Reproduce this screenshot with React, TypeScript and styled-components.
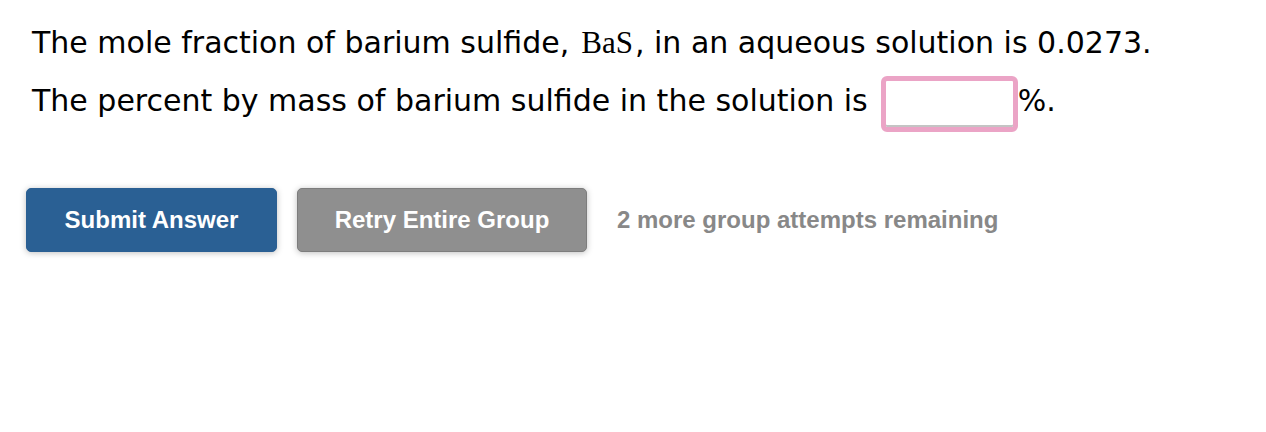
import React from "react";
import styled, { createGlobalStyle } from "styled-components";

const Global = createGlobalStyle`
  html, body { margin: 0; padding: 0; background: #fff; }
  body { width: 1266px; height: 432px; overflow: hidden; }
`;

const Page = styled.div`
  padding: 20px 0 0 32px;
  font-family: "DejaVu Sans", Verdana, sans-serif;
  color: #000;
`;

const Line = styled.div<{ $h: number }>`
  font-size: 30px;
  line-height: 44px;
  height: ${(p) => p.$h}px;
  display: flex;
  align-items: center;
  white-space: nowrap;
`;

const Formula = styled.span`
  font-family: "Liberation Serif", "Times New Roman", serif;
  font-size: 31px;
  margin: 0 2px 0 12px;
`;

const AnswerBox = styled.span`
  display: inline-block;
  flex-shrink: 0;
  box-sizing: border-box;
  width: 137px;
  height: 56px;
  margin: 5px 0 0 13px;
  border: 5px solid #eba4c6;
  border-radius: 6px;
  background: #fff;
  box-shadow: inset 0 -2px 0 #c4c4c4;
`;

const Actions = styled.div`
  display: flex;
  align-items: center;
  gap: 20px;
  margin: 51px 0 0 -6px;
`;

const Button = styled.button<{ $variant: "primary" | "secondary"; $w: number }>`
  box-sizing: border-box;
  width: ${(p) => p.$w}px;
  height: 64px;
  border-radius: 5px;
  border: 1px solid ${(p) => (p.$variant === "primary" ? "#2a5f93" : "#7d7d7d")};
  background: ${(p) => (p.$variant === "primary" ? "#2a6094" : "#8f8f8f")};
  color: #fff;
  font-family: "Liberation Sans", Arial, sans-serif;
  font-weight: 700;
  font-size: 24px;
  box-shadow: 0 1px 6px rgba(0, 0, 0, 0.25);
  padding: 0;
`;

const Remaining = styled.span`
  margin-left: 10px;
  font-family: "Liberation Sans", Arial, sans-serif;
  font-weight: 700;
  font-size: 24px;
  color: #888;
`;

export default function App() {
  return (
    <>
      <Global />
      <Page>
        <Line $h={45}>
          The mole fraction of barium sulfide,<Formula>BaS</Formula>, in an aqueous solution is 0.0273.
        </Line>
        <Line $h={72}>
          The percent by mass of barium sulfide in the solution is
          <AnswerBox />
          %.
        </Line>
        <Actions>
          <Button $variant="primary" $w={251}>Submit Answer</Button>
          <Button $variant="secondary" $w={290}>Retry Entire Group</Button>
          <Remaining>2 more group attempts remaining</Remaining>
        </Actions>
      </Page>
    </>
  );
}
